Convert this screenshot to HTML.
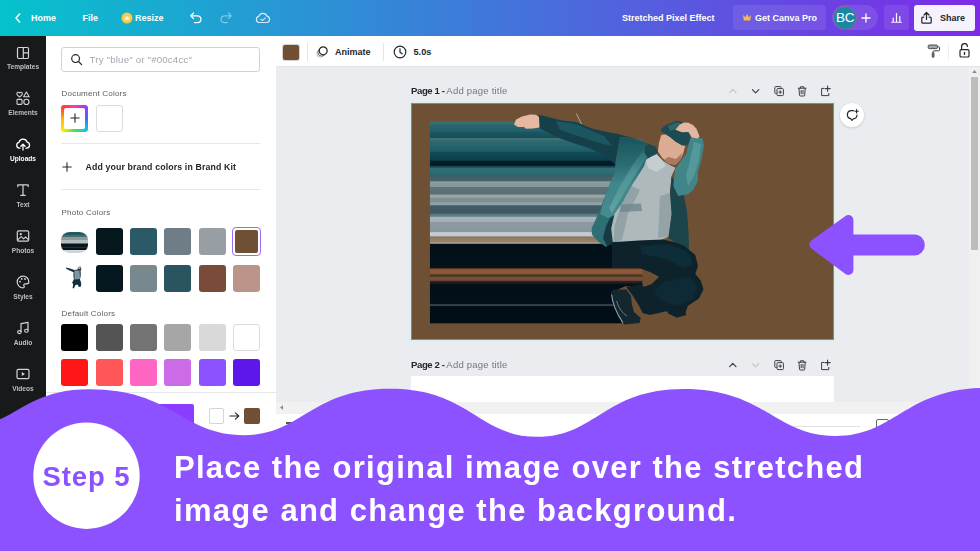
<!DOCTYPE html>
<html lang="en">
<head>
<meta charset="utf-8">
<title>Step 5 - Stretched Pixel Effect</title>
<style>
*{box-sizing:border-box;margin:0;padding:0}
html,body{width:980px;height:551px;overflow:hidden;background:#ebecf0}
body{position:relative;font-family:"Liberation Sans",Arial,sans-serif;color:#0e1318}
.abs{position:absolute}
#topbar{left:0;top:0;width:980px;height:36px;background:linear-gradient(90deg,#05c3cc 0%,#7d2ae8 100%)}
#topbar .t{position:absolute;color:#fff;font-weight:bold;font-size:9px;line-height:12px;top:12px;white-space:nowrap}
#side{left:0;top:36px;width:46px;height:515px;background:#18191b}
#side .lab{position:absolute;left:0;width:46px;text-align:center;color:#bcbfc4;font-size:6.6px;font-weight:bold;line-height:8px}
#side svg{position:absolute;left:15px;width:16px;height:16px;overflow:visible}
#panel{left:46px;top:36px;width:229.5px;height:515px;background:#fff}
#toolbar{left:275.5px;top:36px;width:704.5px;height:30.6px;background:#fff;border-bottom:1px solid #e2e3e7}
#toolbar>*{margin-top:.8px}
.sw{position:absolute;width:27px;height:27px;border-radius:3px}
.ptxt{position:absolute;font-size:8.1px;letter-spacing:.18px;line-height:10px;color:#5b6066;white-space:nowrap}
.hr{position:absolute;left:61px;width:199px;height:1px;background:#e6e7ea}
.plabel{position:absolute;font-size:9.55px;letter-spacing:.2px;line-height:12px;white-space:nowrap;color:#73777c}
.plabel b{color:#22262b;letter-spacing:-.4px;margin-right:-.4px}
</style>
</head>
<body>
<!-- underlay blocks (so soft edges of the UI layer blend into the same colours) -->
<div class="abs" style="left:0;top:0;width:980px;height:36px;background:linear-gradient(90deg,#05c3cc 0%,#7d2ae8 100%)"></div>
<div class="abs" style="left:0;top:36px;width:46px;height:515px;background:#18191b"></div>
<div class="abs" style="left:46px;top:36px;width:229.5px;height:515px;background:#fff"></div>
<div class="abs" style="left:275.5px;top:36px;width:704.5px;height:30px;background:#fff"></div>
<div class="abs" style="left:969px;top:67px;width:11px;height:347px;background:#f0f0f1"></div>
<div id="ui" class="abs" style="left:0;top:0;width:980px;height:551px;filter:blur(.5px)">
<!-- ============ TOP BAR ============ -->
<div class="abs" id="topbar">
  <svg class="abs" style="left:14px;top:12px" width="8" height="12" viewBox="0 0 8 12"><path d="M5.6 2 L2 6 L5.6 10" fill="none" stroke="#fff" stroke-width="1.5" stroke-linecap="round" stroke-linejoin="round"/></svg>
  <span class="t" style="left:31px">Home</span>
  <span class="t" style="left:82.5px">File</span>
  <svg class="abs" style="left:121px;top:12px" width="12" height="12" viewBox="0 0 12 12"><circle cx="6" cy="6" r="5.5" fill="#f8c94a"/><path d="M3.2 4.3 L4.8 5.8 L6 3.6 L7.2 5.8 L8.8 4.3 L8.2 8.2 L3.8 8.2 Z" fill="#fff6d8"/></svg>
  <span class="t" style="left:135px">Resize</span>
  <svg class="abs" style="left:189px;top:11px" width="14" height="14" viewBox="0 0 14 14"><path d="M4.5 2 L1.8 4.8 L4.5 7.6 M2 4.8 H8.5 A3.4 3.4 0 0 1 8.5 11.6 H5.5" fill="none" stroke="#fff" stroke-width="1.3" stroke-linecap="round" stroke-linejoin="round"/></svg>
  <svg class="abs" style="left:219px;top:11px;opacity:.4" width="14" height="14" viewBox="0 0 14 14"><path d="M9.5 2 L12.2 4.8 L9.5 7.6 M12 4.8 H5.5 A3.4 3.4 0 0 0 5.5 11.6 H8.5" fill="none" stroke="#fff" stroke-width="1.3" stroke-linecap="round" stroke-linejoin="round"/></svg>
  <svg class="abs" style="left:255px;top:11px;opacity:.8" width="16" height="14" viewBox="0 0 16 14"><path d="M4.2 11.5 A3.1 3.1 0 0 1 3.8 5.4 A4.3 4.3 0 0 1 12 5.2 A3.2 3.2 0 0 1 11.8 11.5 Z" fill="none" stroke="#fff" stroke-width="1.2" stroke-linejoin="round"/><path d="M5.8 8.2 L7.4 9.7 L10.2 6.8" fill="none" stroke="#fff" stroke-width="1.1" stroke-linecap="round" stroke-linejoin="round"/></svg>
  <span class="t" style="left:622px">Stretched Pixel Effect</span>
  <div class="abs" style="left:733px;top:5px;width:93px;height:25px;border-radius:3px;background:rgba(255,255,255,.09)"></div>
  <svg class="abs" style="left:742px;top:13px" width="10" height="9" viewBox="0 0 10 9"><path d="M1 2 L3.2 4.2 L5 1 L6.8 4.2 L9 2 L8.2 7.6 L1.8 7.6 Z" fill="#f5b944"/></svg>
  <span class="t" style="left:755px">Get Canva Pro</span>
  <div class="abs" style="left:832px;top:5px;width:46px;height:25px;border-radius:13px;background:rgba(255,255,255,.10)"></div>
  <div class="abs" style="left:833px;top:6px;width:24px;height:24px;border-radius:12px;background:#1a87a6;border:1.2px solid #a75a8a;color:#fff;font-size:13.5px;line-height:21.6px;text-align:center;letter-spacing:-.3px">BC</div>
  <svg class="abs" style="left:861px;top:13px" width="10" height="10" viewBox="0 0 10 10"><path d="M5 1 V9 M1 5 H9" stroke="#fff" stroke-width="1.3" stroke-linecap="round"/></svg>
  <div class="abs" style="left:884px;top:5px;width:25px;height:25px;border-radius:3px;background:rgba(255,255,255,.09)"></div>
  <svg class="abs" style="left:890px;top:11px" width="13" height="13" viewBox="0 0 13 13"><path d="M3.2 10.5 V7 M6.5 10.5 V2.5 M9.8 10.5 V5.5" stroke="#fff" stroke-width="1.2" stroke-linecap="round"/><path d="M1.5 11.3 H11.5" stroke="#fff" stroke-width=".9" stroke-linecap="round"/></svg>
  <div class="abs" style="left:914px;top:5px;width:61px;height:26px;border-radius:3px;background:#f6f2fd"></div>
  <svg class="abs" style="left:920px;top:11px" width="13" height="14" viewBox="0 0 13 14"><path d="M6.5 8.5 V1.8 M4 4 L6.5 1.5 L9 4" fill="none" stroke="#22262b" stroke-width="1.2" stroke-linecap="round" stroke-linejoin="round"/><path d="M3.8 6.2 H2.8 A1 1 0 0 0 1.8 7.2 V11.2 A1 1 0 0 0 2.8 12.2 H10.2 A1 1 0 0 0 11.2 11.2 V7.2 A1 1 0 0 0 10.2 6.2 H9.2" fill="none" stroke="#22262b" stroke-width="1.2" stroke-linecap="round"/></svg>
  <span class="t" style="left:940px;color:#22262b">Share</span>
</div>
<!-- ============ LEFT SIDEBAR ============ -->
<div class="abs" id="side">
  <svg style="top:9px" viewBox="0 0 16 16"><rect x="2.5" y="2.5" width="11" height="11" rx="1.2" fill="none" stroke="#d2d4d8" stroke-width="1.2"/><path d="M8.3 2.5 V13.5 M8.3 7.8 H13.5" stroke="#d2d4d8" stroke-width="1.2"/></svg>
  <div class="lab" style="top:27px">Templates</div>
  <svg style="top:54px" viewBox="0 0 16 16"><path d="M4.6 7 C3 5.8 1.8 4.9 1.8 3.7 A1.5 1.5 0 0 1 4.6 3 A1.5 1.5 0 0 1 7.4 3.7 C7.4 4.9 6.2 5.8 4.6 7 Z M11.4 2 L14.2 6.8 H8.6 Z" fill="none" stroke="#d2d4d8" stroke-width="1.1" stroke-linejoin="round"/><rect x="2" y="9.4" width="5" height="5" rx=".8" fill="none" stroke="#d2d4d8" stroke-width="1.1"/><circle cx="11.4" cy="11.9" r="2.6" fill="none" stroke="#d2d4d8" stroke-width="1.1"/></svg>
  <div class="lab" style="top:73px">Elements</div>
  <svg style="top:100px" viewBox="0 0 16 16"><path d="M5 12.2 H4.4 A3 3 0 0 1 4 6.3 A4.2 4.2 0 0 1 12.1 6.1 A3.1 3.1 0 0 1 11.8 12.2 H11" fill="none" stroke="#fff" stroke-width="1.3" stroke-linecap="round" stroke-linejoin="round"/><path d="M8 14 V8.3 M5.9 10.2 L8 8.1 L10.1 10.2" fill="none" stroke="#fff" stroke-width="1.3" stroke-linecap="round" stroke-linejoin="round"/></svg>
  <div class="lab" style="top:119px;color:#fff">Uploads</div>
  <svg style="top:146px" viewBox="0 0 16 16"><path d="M2.8 4.6 V2.8 H13.2 V4.6 M8 2.8 V13.4 M5.8 13.4 H10.2" fill="none" stroke="#d2d4d8" stroke-width="1.2" stroke-linecap="round" stroke-linejoin="round"/></svg>
  <div class="lab" style="top:165px">Text</div>
  <svg style="top:192px" viewBox="0 0 16 16"><rect x="2.3" y="2.8" width="11.4" height="10.4" rx="1.4" fill="none" stroke="#d2d4d8" stroke-width="1.2"/><circle cx="5.8" cy="6.2" r="1.1" fill="#d2d4d8"/><path d="M2.6 11.8 L6.2 8.6 L8.6 10.8 L10.6 9 L13.4 11.6" fill="none" stroke="#d2d4d8" stroke-width="1.1" stroke-linejoin="round"/></svg>
  <div class="lab" style="top:211px">Photos</div>
  <svg style="top:238px" viewBox="0 0 16 16"><path d="M8 2.2 A5.8 5.8 0 1 0 8 13.8 C9.4 13.8 9.6 12.7 9 11.9 C8.3 10.9 9 9.8 10.2 9.8 H11.8 A2 2 0 0 0 13.8 7.8 C13.8 4.6 11.2 2.2 8 2.2 Z" fill="none" stroke="#d2d4d8" stroke-width="1.2" stroke-linejoin="round"/><circle cx="5" cy="7.6" r=".9" fill="#d2d4d8"/><circle cx="6.8" cy="4.9" r=".9" fill="#d2d4d8"/><circle cx="10" cy="5" r=".9" fill="#d2d4d8"/></svg>
  <div class="lab" style="top:257px">Styles</div>
  <svg style="top:284px" viewBox="0 0 16 16"><path d="M6 12 V3.6 L13 2.4 V10.6" fill="none" stroke="#d2d4d8" stroke-width="1.2" stroke-linejoin="round"/><ellipse cx="4.4" cy="12.1" rx="1.8" ry="1.5" fill="none" stroke="#d2d4d8" stroke-width="1.1"/><ellipse cx="11.4" cy="10.8" rx="1.8" ry="1.5" fill="none" stroke="#d2d4d8" stroke-width="1.1"/></svg>
  <div class="lab" style="top:303px">Audio</div>
  <svg style="top:330px" viewBox="0 0 16 16"><rect x="2" y="3.4" width="12" height="9.2" rx="1.4" fill="none" stroke="#d2d4d8" stroke-width="1.2"/><path d="M6.8 6 L10 8 L6.8 10 Z" fill="#d2d4d8"/></svg>
  <div class="lab" style="top:349px">Videos</div>
</div>

<!-- ============ COLOR PANEL ============ -->
<div class="abs" id="panel">
  <div class="abs" style="left:15px;top:11px;width:198.5px;height:24.5px;border:1px solid #cfd2d7;border-radius:3px"></div>
  <svg class="abs" style="left:23.5px;top:17px" width="13" height="13" viewBox="0 0 13 13"><circle cx="5.6" cy="5.6" r="3.9" fill="none" stroke="#22262b" stroke-width="1.2"/><path d="M8.5 8.5 L11.6 11.6" stroke="#22262b" stroke-width="1.3" stroke-linecap="round"/></svg>
  <div class="ptxt" style="left:43.5px;top:17.5px;font-size:9.7px;line-height:12px;color:#a3a7ad">Try "blue" or "#00c4cc"</div>
  <div class="ptxt" style="left:15.5px;top:52.5px">Document Colors</div>
  <div class="sw" style="left:15px;top:68.5px;background:conic-gradient(from -45deg,#ff3b3b,#ff3bb0,#a03bff,#3b6bff,#19c3e6,#4be04b,#ffe600,#ffb400,#ff3b3b)"></div>
  <div class="abs" style="left:18px;top:71.5px;width:21px;height:21px;border-radius:2px;background:#fff"></div>
  <svg class="abs" style="left:23.5px;top:77px" width="10" height="10" viewBox="0 0 10 10"><path d="M5 .8 V9.2 M.8 5 H9.2" stroke="#22262b" stroke-width="1.1" stroke-linecap="round"/></svg>
  <div class="sw" style="left:49.6px;top:68.5px;background:#fff;border:1px solid #d9dbde"></div>
  <div class="hr" style="left:15px;top:106.5px"></div>
  <svg class="abs" style="left:15.5px;top:125.5px" width="10" height="10" viewBox="0 0 10 10"><path d="M5 .8 V9.2 M.8 5 H9.2" stroke="#22262b" stroke-width="1.1" stroke-linecap="round"/></svg>
  <div class="ptxt" style="left:39.5px;top:125.6px;font-size:8.75px;font-weight:bold;color:#22262b;letter-spacing:.14px">Add your brand colors in Brand Kit</div>
  <div class="hr" style="left:15px;top:153px"></div>
  <div class="ptxt" style="left:15.5px;top:171.8px">Photo Colors</div>
  <!-- row 1 -->
  <div class="abs" style="left:15px;top:196px;width:27.3px;height:20.6px;border-radius:9px/8px;background:linear-gradient(180deg,#1e5a60 0 16%,#4a6a70 16% 24%,#8c9aa0 24% 40%,#b4bfc3 40% 50%,#6b6a62 50% 56%,#08161b 56% 70%,#3a2a20 70% 76%,#07151a 76% 86%,#cfd6d9 86% 100%)"></div>
  <div class="sw" style="left:49.6px;top:192px;background:#07171e"></div>
  <div class="sw" style="left:83.9px;top:192px;background:#2b5a66"></div>
  <div class="sw" style="left:118.3px;top:192px;background:#6e7d86"></div>
  <div class="sw" style="left:152.6px;top:192px;background:#989fa4"></div>
  <div class="abs" style="left:186px;top:191px;width:29px;height:29px;border-radius:4px;border:1.6px solid #9b6bf2;background:#fff"></div>
  <div class="abs" style="left:189px;top:194px;width:23px;height:23px;border-radius:2px;background:#6f5035"></div>
  <!-- row 2 -->
  <svg class="abs" style="left:15px;top:229px" width="27" height="27" viewBox="61 265 27 27"><path d="M66 267.6 L70 268.6 L74.5 270 L77.5 269.5 L78.2 267 L80.4 266.6 L81.4 268.6 L80.6 271 L80.8 275 L80 279.5 L81.2 283 L81 286.5 L79 287 L77.5 284.5 L75.5 285 L73.8 288.5 L72.6 288 L73.2 284.6 L72.2 282.4 L73.8 279.6 L73.4 275 L73.6 272.2 L69.6 270.4 L66.2 268.8 Z" fill="#14303a"/><path d="M74.4 270.6 L79.6 270.4 L80 279 L74.4 279.4 Z" fill="#7f97a2"/><circle cx="79.4" cy="268" r="1.3" fill="#c9a08e"/></svg>
  <div class="sw" style="left:49.6px;top:229px;background:#051820"></div>
  <div class="sw" style="left:83.9px;top:229px;background:#76898f"></div>
  <div class="sw" style="left:118.3px;top:229px;background:#2a5560"></div>
  <div class="sw" style="left:152.6px;top:229px;background:#7b4b3a"></div>
  <div class="sw" style="left:187px;top:229px;background:#bb948a"></div>
  <div class="ptxt" style="left:15.5px;top:272.6px">Default Colors</div>
  <!-- row 3 -->
  <div class="sw" style="left:15px;top:288px;background:#000"></div>
  <div class="sw" style="left:49.6px;top:288px;background:#545454"></div>
  <div class="sw" style="left:83.9px;top:288px;background:#737373"></div>
  <div class="sw" style="left:118.3px;top:288px;background:#a6a6a6"></div>
  <div class="sw" style="left:152.6px;top:288px;background:#d9d9d9"></div>
  <div class="sw" style="left:187px;top:288px;background:#fff;border:1px solid #d9dbde"></div>
  <!-- row 4 -->
  <div class="sw" style="left:15px;top:322.5px;background:#ff1616"></div>
  <div class="sw" style="left:49.6px;top:322.5px;background:#ff5757"></div>
  <div class="sw" style="left:83.9px;top:322.5px;background:#ff66c4"></div>
  <div class="sw" style="left:118.3px;top:322.5px;background:#cb6ce6"></div>
  <div class="sw" style="left:152.6px;top:322.5px;background:#8c52ff"></div>
  <div class="sw" style="left:187px;top:322.5px;background:#5e17eb"></div>
  <div class="abs" style="left:0;top:356px;width:230px;height:1px;background:#e6e7ea"></div>
  <!-- footer: change-all button -->
  <div class="abs" style="left:15px;top:367.5px;width:132.5px;height:24px;border-radius:2px;background:#8b3dff"></div>
  <div class="abs" style="left:162.8px;top:372.3px;width:15.6px;height:15.4px;border:1px solid #d3d5d9;border-radius:2px;background:#fff"></div>
  <svg class="abs" style="left:183px;top:375px" width="11" height="10" viewBox="0 0 11 10"><path d="M1 5 H9.6 M6.4 1.8 L9.8 5 L6.4 8.2" fill="none" stroke="#22262b" stroke-width="1.1" stroke-linecap="round" stroke-linejoin="round"/></svg>
  <div class="abs" style="left:198px;top:372.3px;width:16.2px;height:15.4px;border-radius:2px;background:#6f5035"></div>
</div>
<!-- ============ TOOLBAR ============ -->
<div class="abs" id="toolbar">
  <div class="abs" style="left:7.5px;top:8px;width:15.5px;height:15px;border-radius:2px;background:#6f5035;box-shadow:0 0 0 1px rgba(111,80,53,.25)"></div>
  <div class="abs" style="left:31px;top:6px;width:1px;height:18px;background:#e4e5e8"></div>
  <svg class="abs" style="left:38px;top:7px" width="16" height="16" viewBox="0 0 16 16"><circle cx="6.4" cy="9.6" r="3.6" fill="none" stroke="#b9bcc1" stroke-width="1"/><circle cx="7.6" cy="8.4" r="3.7" fill="#fff" stroke="#6a6e74" stroke-width="1"/><circle cx="9.2" cy="6.8" r="4" fill="#fff" stroke="#22262b" stroke-width="1.2"/></svg>
  <div class="abs" style="left:59.5px;top:9px;font-size:9px;line-height:12px;font-weight:bold;color:#22262b">Animate</div>
  <div class="abs" style="left:107.5px;top:6px;width:1px;height:18px;background:#e4e5e8"></div>
  <svg class="abs" style="left:117px;top:8px" width="14" height="14" viewBox="0 0 14 14"><circle cx="7" cy="7" r="5.8" fill="none" stroke="#22262b" stroke-width="1.2"/><path d="M7 3.8 V7.2 L9.2 8.8" fill="none" stroke="#22262b" stroke-width="1.2" stroke-linecap="round" stroke-linejoin="round"/></svg>
  <div class="abs" style="left:138px;top:9px;font-size:9.2px;line-height:12px;font-weight:bold;color:#22262b">5.0s</div>
  <svg class="abs" style="left:650px;top:6.6px" width="15" height="16" viewBox="0 0 15 16"><rect x="2.2" y="2" width="9.2" height="3.6" rx="1.1" fill="#a1a4a9" stroke="#3c3f44" stroke-width=".9"/><path d="M11.4 3.8 H12.6 A.9 .9 0 0 1 13.5 4.7 V6.9 A.9 .9 0 0 1 12.6 7.8 H8 A.9 .9 0 0 0 7.1 8.7 V9.8" fill="none" stroke="#3c3f44" stroke-width="1"/><rect x="6" y="9.6" width="2.2" height="4.8" rx=".8" fill="#6a6d72" stroke="#3c3f44" stroke-width=".5"/></svg>
  <div class="abs" style="left:672.5px;top:6px;width:1px;height:18px;background:#eeeff1"></div>
  <svg class="abs" style="left:682px;top:5px" width="13" height="17" viewBox="0 0 13 17"><path d="M3.6 7.6 V4.6 A2.9 2.9 0 0 1 9.4 4.4" fill="none" stroke="#22262b" stroke-width="1.2" stroke-linecap="round"/><rect x="2" y="7.6" width="9" height="7.4" rx="1.3" fill="none" stroke="#22262b" stroke-width="1.2"/><path d="M6.5 10.4 V12.4" stroke="#22262b" stroke-width="1.3" stroke-linecap="round"/></svg>
</div>

<!-- ============ CANVAS AREA ============ -->
<!-- vertical scrollbar -->
<div class="abs" style="left:969px;top:67px;width:11px;height:347px;background:#f0f0f1"></div>
<div class="abs" style="left:971px;top:77px;width:7px;height:173px;background:#bdbdbe"></div>
<svg class="abs" style="left:971px;top:69px" width="7" height="5" viewBox="0 0 7 5"><path d="M3.5 1 L5.8 4 H1.2 Z" fill="#8c8c8c"/></svg>

<!-- page 1 header -->
<div class="plabel" style="left:411px;top:85px"><b>Page 1 -</b> Add page title</div>
<svg class="abs" style="left:726px;top:84px" width="108" height="14" viewBox="0 0 108 14">
  <path d="M3.6 8.6 L6.8 5.4 L10 8.6" fill="none" stroke="#c3c5c9" stroke-width="1.2" stroke-linecap="round" stroke-linejoin="round"/>
  <path d="M26.4 5.6 L29.6 8.8 L32.8 5.6" fill="none" stroke="#3a3f45" stroke-width="1.2" stroke-linecap="round" stroke-linejoin="round"/>
  <path d="M50.8 9.6 H49.6 A.8 .8 0 0 1 48.8 8.8 V3.4 A.8 .8 0 0 1 49.6 2.6 H54.4 A.8 .8 0 0 1 55.2 3.4 V4.4" fill="none" stroke="#3a3f45" stroke-width="1"/><rect x="51" y="4.6" width="6.4" height="7" rx=".9" fill="none" stroke="#3a3f45" stroke-width="1"/><path d="M54.2 6.4 V9.8 M52.5 8.1 H55.9" stroke="#3a3f45" stroke-width="1"/>
  <path d="M72.2 4.2 H80 M74.4 4 V2.8 H77.8 V4 M73 4.4 L73.5 11.2 A.8 .8 0 0 0 74.3 12 H77.9 A.8 .8 0 0 0 78.7 11.2 L79.2 4.4 M75.2 6.4 V9.8 M77 6.4 V9.8" fill="none" stroke="#3a3f45" stroke-width="1" stroke-linecap="round" stroke-linejoin="round"/>
  <path d="M98.2 4.4 H95.6 V11.6 H102.8 V9" fill="none" stroke="#3a3f45" stroke-width="1" stroke-linejoin="round"/><path d="M101.6 2 V7.2 M99 4.6 H104.2" stroke="#3a3f45" stroke-width="1.1" stroke-linecap="round"/>
</svg>

<!-- comment bubble -->
<div class="abs" style="left:840px;top:103px;width:24px;height:24px;border-radius:12px;background:#fff;box-shadow:0 1px 3px rgba(40,50,70,.18)"></div>
<svg class="abs" style="left:845px;top:108px" width="15" height="15" viewBox="0 0 15 15"><path d="M8.6 2.6 H6.4 A4.1 4.1 0 0 0 5.6 10.7 L6.9 12.3 L8.3 10.8 A4.1 4.1 0 0 0 12 7.2" fill="none" stroke="#22262b" stroke-width="1.2" stroke-linecap="round" stroke-linejoin="round"/><path d="M11.6 1.6 V5 M9.9 3.3 H13.3" stroke="#22262b" stroke-width="1.1" stroke-linecap="round"/></svg>

<!-- page 1 canvas -->
<div class="abs" style="left:408.8px;top:100.6px;width:427.2px;height:241.2px;background:#d9f2f1;border-radius:1px"></div>
<div class="abs" style="left:410.7px;top:102.6px;width:423.7px;height:237.4px;background:#3fa89f"></div>
<div class="abs" style="left:412px;top:104px;width:421px;height:234.5px;background:#6e5035;overflow:hidden">
  <svg class="abs" style="left:0;top:0" width="421" height="234.5" viewBox="412 104 421 234.5">
  <g><defs><linearGradient id="s0" x1="0" y1="0" x2="0" y2="1"><stop offset="0" stop-color="#3a7279"/><stop offset="1" stop-color="#2f6a73"/></linearGradient><linearGradient id="s1" x1="0" y1="0" x2="0" y2="1"><stop offset="0" stop-color="#2b6771"/><stop offset="1" stop-color="#245e69"/></linearGradient><linearGradient id="s2" x1="0" y1="0" x2="0" y2="1"><stop offset="0" stop-color="#1b5762"/><stop offset="1" stop-color="#134e5a"/></linearGradient><linearGradient id="s3" x1="0" y1="0" x2="0" y2="1"><stop offset="0" stop-color="#3c7981"/><stop offset="1" stop-color="#337179"/></linearGradient><linearGradient id="s4" x1="0" y1="0" x2="0" y2="1"><stop offset="0" stop-color="#2c6b74"/><stop offset="1" stop-color="#1e5a66"/></linearGradient><linearGradient id="s5" x1="0" y1="0" x2="0" y2="1"><stop offset="0" stop-color="#114d59"/><stop offset="1" stop-color="#0a3c48"/></linearGradient><linearGradient id="s6" x1="0" y1="0" x2="0" y2="1"><stop offset="0" stop-color="#03202a"/><stop offset="1" stop-color="#021822"/></linearGradient><linearGradient id="s7" x1="0" y1="0" x2="0" y2="1"><stop offset="0" stop-color="#0f3f4a"/><stop offset="1" stop-color="#27656e"/></linearGradient><linearGradient id="s8" x1="0" y1="0" x2="0" y2="1"><stop offset="0" stop-color="#2f7179"/><stop offset="1" stop-color="#2a6870"/></linearGradient><linearGradient id="s9" x1="0" y1="0" x2="0" y2="1"><stop offset="0" stop-color="#3a5c63"/><stop offset="1" stop-color="#4a656b"/></linearGradient><linearGradient id="s10" x1="0" y1="0" x2="0" y2="1"><stop offset="0" stop-color="#8d9da2"/><stop offset="1" stop-color="#86979c"/></linearGradient><linearGradient id="s11" x1="0" y1="0" x2="0" y2="1"><stop offset="0" stop-color="#5f747a"/><stop offset="1" stop-color="#5a6f75"/></linearGradient><linearGradient id="s12" x1="0" y1="0" x2="0" y2="1"><stop offset="0" stop-color="#9ba9ac"/><stop offset="1" stop-color="#95a3a6"/></linearGradient><linearGradient id="s13" x1="0" y1="0" x2="0" y2="1"><stop offset="0" stop-color="#7d8e90"/><stop offset="1" stop-color="#7f9093"/></linearGradient><linearGradient id="s14" x1="0" y1="0" x2="0" y2="1"><stop offset="0" stop-color="#90a4ab"/><stop offset="1" stop-color="#8a9ea5"/></linearGradient><linearGradient id="s15" x1="0" y1="0" x2="0" y2="1"><stop offset="0" stop-color="#415c64"/><stop offset="1" stop-color="#3d5860"/></linearGradient><linearGradient id="s16" x1="0" y1="0" x2="0" y2="1"><stop offset="0" stop-color="#5a757d"/><stop offset="1" stop-color="#64808a"/></linearGradient><linearGradient id="s17" x1="0" y1="0" x2="0" y2="1"><stop offset="0" stop-color="#a6b6bc"/><stop offset="1" stop-color="#9fafb5"/></linearGradient><linearGradient id="s18" x1="0" y1="0" x2="0" y2="1"><stop offset="0" stop-color="#8e9ca0"/><stop offset="1" stop-color="#8a969d"/></linearGradient><linearGradient id="s19" x1="0" y1="0" x2="0" y2="1"><stop offset="0" stop-color="#c5d0d4"/><stop offset="1" stop-color="#c0cace"/></linearGradient><linearGradient id="s20" x1="0" y1="0" x2="0" y2="1"><stop offset="0" stop-color="#8a7560"/><stop offset="1" stop-color="#9a8672"/></linearGradient><linearGradient id="s21" x1="0" y1="0" x2="0" y2="1"><stop offset="0" stop-color="#b5a898"/><stop offset="1" stop-color="#a89a8a"/></linearGradient><linearGradient id="s22" x1="0" y1="0" x2="0" y2="1"><stop offset="0" stop-color="#020f18"/><stop offset="1" stop-color="#03121b"/></linearGradient><linearGradient id="s23" x1="0" y1="0" x2="0" y2="1"><stop offset="0" stop-color="#4a3020"/><stop offset="1" stop-color="#6a4530"/></linearGradient><linearGradient id="s24" x1="0" y1="0" x2="0" y2="1"><stop offset="0" stop-color="#92593c"/><stop offset="1" stop-color="#8a563a"/></linearGradient><linearGradient id="s25" x1="0" y1="0" x2="0" y2="1"><stop offset="0" stop-color="#4f3523"/><stop offset="1" stop-color="#4a3220"/></linearGradient><linearGradient id="s26" x1="0" y1="0" x2="0" y2="1"><stop offset="0" stop-color="#7a523c"/><stop offset="1" stop-color="#70493a"/></linearGradient><linearGradient id="s27" x1="0" y1="0" x2="0" y2="1"><stop offset="0" stop-color="#3a2a20"/><stop offset="1" stop-color="#0a1218"/></linearGradient><linearGradient id="s28" x1="0" y1="0" x2="0" y2="1"><stop offset="0" stop-color="#020e18"/><stop offset="1" stop-color="#03111a"/></linearGradient><linearGradient id="s29" x1="0" y1="0" x2="0" y2="1"><stop offset="0" stop-color="#4a5a66"/><stop offset="1" stop-color="#4a5a66"/></linearGradient><linearGradient id="s30" x1="0" y1="0" x2="0" y2="1"><stop offset="0" stop-color="#020e17"/><stop offset="1" stop-color="#020d15"/></linearGradient><clipPath id="sc"><path d="M429.8 121.4 L560 121.4 L600 131.5 L642.6 140 L642.6 286 L626 286 L612 292 L622 323.6 L429.8 323.6 Z"/></clipPath><linearGradient id="jk" gradientUnits="userSpaceOnUse" x1="0" y1="138" x2="0" y2="215"><stop offset="0" stop-color="#1c555d"/><stop offset=".35" stop-color="#2c6c73"/><stop offset=".6" stop-color="#41868a"/><stop offset="1" stop-color="#468b8e"/></linearGradient><linearGradient id="jk2" gradientUnits="userSpaceOnUse" x1="0" y1="148" x2="0" y2="213"><stop offset="0" stop-color="#2a6a72"/><stop offset=".4" stop-color="#4f9294"/><stop offset="1" stop-color="#62a2a2"/></linearGradient><filter id="soft" x="-5%" y="-5%" width="110%" height="110%"><feGaussianBlur stdDeviation="0.55"/></filter></defs>
<g clip-path="url(#sc)"><rect x="429.8" y="121.4" width="212.8" height="3.4" fill="url(#s0)"/>
<rect x="429.8" y="124.5" width="212.8" height="7.3" fill="url(#s1)"/>
<rect x="429.8" y="131.5" width="212.8" height="7.0" fill="url(#s2)"/>
<rect x="429.8" y="138.2" width="212.8" height="2.5" fill="url(#s3)"/>
<rect x="429.8" y="140.4" width="212.8" height="11.7" fill="url(#s4)"/>
<rect x="429.8" y="151.8" width="212.8" height="9.2" fill="url(#s5)"/>
<rect x="429.8" y="160.7" width="212.8" height="5.4" fill="url(#s6)"/>
<rect x="429.8" y="165.8" width="212.8" height="2.9" fill="url(#s7)"/>
<rect x="429.8" y="168.4" width="212.8" height="6.6" fill="url(#s8)"/>
<rect x="429.8" y="174.7" width="212.8" height="6.9" fill="url(#s9)"/>
<rect x="429.8" y="181.3" width="212.8" height="6.0" fill="url(#s10)"/>
<rect x="429.8" y="187.0" width="212.8" height="7.9" fill="url(#s11)"/>
<rect x="429.8" y="194.6" width="212.8" height="3.5" fill="url(#s12)"/>
<rect x="429.8" y="197.8" width="212.8" height="4.7" fill="url(#s13)"/>
<rect x="429.8" y="202.2" width="212.8" height="3.5" fill="url(#s14)"/>
<rect x="429.8" y="205.4" width="212.8" height="8.6" fill="url(#s15)"/>
<rect x="429.8" y="213.7" width="212.8" height="3.4" fill="url(#s16)"/>
<rect x="429.8" y="216.8" width="212.8" height="5.4" fill="url(#s17)"/>
<rect x="429.8" y="221.9" width="212.8" height="10.5" fill="url(#s18)"/>
<rect x="429.8" y="232.1" width="212.8" height="4.7" fill="url(#s19)"/>
<rect x="429.8" y="236.5" width="212.8" height="6.1" fill="url(#s20)"/>
<rect x="429.8" y="242.3" width="212.8" height="1.8" fill="url(#s21)"/>
<rect x="429.8" y="243.8" width="212.8" height="24.5" fill="url(#s22)"/>
<rect x="429.8" y="268.0" width="212.8" height="1.7" fill="url(#s23)"/>
<rect x="429.8" y="269.4" width="212.8" height="5.2" fill="url(#s24)"/>
<rect x="429.8" y="274.3" width="212.8" height="2.8" fill="url(#s25)"/>
<rect x="429.8" y="276.8" width="212.8" height="4.3" fill="url(#s26)"/>
<rect x="429.8" y="280.8" width="212.8" height="3.6" fill="url(#s27)"/>
<rect x="429.8" y="284.1" width="212.8" height="20.7" fill="url(#s28)"/>
<rect x="429.8" y="304.5" width="212.8" height="1.5" fill="url(#s29)"/>
<rect x="429.8" y="305.7" width="212.8" height="18.0" fill="url(#s30)"/></g></g>
  <g><g filter="url(#soft)"><path d="M538.0 115.5 L541.0 115.2 L550.0 117.5 L561.0 120.3 L576.5 122.3 L591.8 128.5 L603.5 131.2 L618.0 134.0 L632.6 138.0 L647.0 143.5 L656.0 147.0 L652.0 156.0 L640.0 166.0 L628.0 170.0 L615.0 164.0 L603.5 155.0 L589.0 148.0 L574.5 143.5 L561.0 138.7 L546.0 131.5 L538.5 128.0 Z" fill="#12414a" />
<path d="M556.0 121.0 L576.0 124.0 L592.0 131.0 L604.0 136.0 L612.0 146.0 L596.0 142.0 L578.0 136.0 L560.0 130.0 Z" fill="#1c5660" />
<path d="M576.3 113.5 L581.5 124" stroke="#b9a58e" stroke-width="1"/>
<path d="M514.0 124.5 L516.0 119.5 L522.0 116.5 L530.0 114.5 L536.0 114.8 L539.0 117.0 L539.5 127.5 L533.0 128.5 L526.0 128.8 L524.0 127.0 L518.0 127.0 Z" fill="#e6b8a2" />
<path d="M620.0 137.0 L632.6 138.0 L647.0 143.5 L652.0 152.0 L643.9 166.5 L632.4 184.5 L622.7 202.4 L616.0 214.0 L612.5 228.0 L611.0 243.0 L606.0 247.0 L598.0 241.5 L592.0 234.5 L591.6 228.6 L598.2 213.9 L606.3 192.7 L614.5 173.0 L616.0 160.0 Z" fill="#2f6e74" />
<path d="M620.0 137.0 L632.6 138.0 L647.0 143.5 L652.0 152.0 L643.9 166.5 L632.4 184.5 L622.7 202.4 L616.0 214.0 L608.0 218.0 L600.0 214.0 L606.3 192.7 L614.5 173.0 L616.0 160.0 Z" fill="url(#jk)" />
<path d="M645.0 148.0 L650.0 152.0 L632.0 180.0 L620.0 200.0 L612.0 213.0 L609.0 208.0 L620.0 186.0 L632.0 166.0 Z" fill="url(#jk2)" />
<path d="M616.0 214.0 L622.7 202.4 L618.0 222.0 L615.0 236.0 L613.0 244.0 L607.0 246.0 L603.0 238.0 L606.0 226.0 L610.0 218.0 Z" fill="#143a41" />
<path d="M646.0 160.0 L655.8 153.6 L662.0 160.0 L668.8 164.5 L675.4 167.7 L671.6 176.0 L670.0 192.7 L671.6 213.9 L668.4 236.7 L660.0 240.5 L639.0 241.0 L612.9 243.0 L611.2 228.6 L614.5 213.9 L622.7 202.4 L632.4 184.5 L643.9 166.5 Z" fill="#aeb9bc" />
<path d="M646.0 160.0 L655.8 153.6 L662.0 160.0 L666.0 166.0 L656.0 172.0 L648.0 168.0 Z" fill="#c4cdcf" />
<path d="M632.0 186.0 L640.0 190.0 L628.0 214.0 L622.0 240.0 L613.5 243.0 L614.5 226.0 L620.0 208.0 Z" fill="#93a2a7" />
<path d="M621.0 204.5 L641.0 203.5 L642.0 211.0 L620.0 212.0 Z" fill="#6f828b" opacity=".75"/>
<path d="M660.0 196.0 L670.0 192.7 L671.6 213.9 L668.4 236.7 L658.0 238.0 Z" fill="#95a3a7" />
<path d="M646.0 145.0 L656.0 146.5 L658.0 152.0 L655.8 154.5 L648.0 158.0 L644.0 152.0 Z" fill="#1d4a50" />
<path d="M671.6 176.3 L678.0 188.0 L684.0 196.0 L687.0 212.0 L688.5 232.0 L689.0 250.0 L676.0 243.0 L668.4 238.0 L671.6 213.9 L670.0 192.7 Z" fill="#1b444b" />
<path d="M690.6 137.8 L702.6 138.3 L704.0 146.0 L701.5 159.0 L698.0 172.0 L697.8 181.2 L693.0 190.0 L688.0 194.3 L678.2 196.0 L673.3 186.0 L675.0 170.0 L679.7 162.3 L686.3 153.6 L688.4 144.9 Z" fill="#428589" />
<path d="M694.0 142.0 L701.0 144.0 L699.0 160.0 L694.0 176.0 L688.0 186.0 L686.0 176.0 L690.0 160.0 Z" fill="#55989a" />
<path d="M661.2 135.0 L666.6 134.0 L675.4 141.6 L685.2 146.0 L683.0 154.0 L680.8 159.0 L675.4 164.8 L668.8 163.6 L662.3 158.0 L658.0 151.4 L659.0 142.7 Z" fill="#dcab93" />
<path d="M668.0 157.0 L676.0 159.0 L682.0 153.0 L680.8 159.0 L675.4 165.0 L668.8 163.8 L664.0 160.0 Z" fill="#a9785f" />
<path d="M660.4 130.4 L664.0 126.0 L668.8 124.0 L676.4 120.8 L682.0 121.8 L690.0 127.5 L690.5 138.0 L688.0 145.0 L682.0 145.5 L675.4 141.6 L670.0 137.0 L664.0 133.5 Z" fill="#1d4b52" />
<path d="M668.0 126.0 L676.0 122.5 L681.0 123.0 L676.0 129.0 L670.0 131.0 Z" fill="#2f666b" />
<path d="M675.4 129.8 L679.7 124.4 L684.0 122.6 L688.4 122.8 L693.0 125.0 L696.5 128.8 L699.5 136.3 L698.0 138.5 L691.7 137.4 L688.4 132.0 L681.9 132.2 Z" fill="#e4b6a2" />
<path d="M611.8 242.3 L639.0 240.6 L662.6 239.5 L676.0 242.5 L684.4 245.9 L695.3 255.0 L698.0 265.9 L695.3 274.0 L700.7 280.4 L703.5 289.5 L698.9 298.5 L688.0 305.8 L685.3 313.0 L675.3 316.7 L666.3 311.2 L649.9 314.9 L642.6 313.0 L639.0 305.8 L633.0 296.0 L628.0 289.5 L626.0 286.7 L640.8 284.5 L644.5 286.7 L651.7 284.0 L659.0 276.8 L650.0 272.0 L644.5 270.0 L640.0 268.0 L612.0 268.0 Z" fill="#0b232c" />
<path d="M640.0 246.0 L668.0 244.0 L688.0 252.0 L693.0 264.0 L684.0 268.0 L664.0 258.0 L642.0 254.0 Z" fill="#102d37" />
<path d="M664.0 282.0 L690.0 276.0 L698.0 288.0 L692.0 300.0 L676.0 306.0 L660.0 300.0 L654.0 290.0 Z" fill="#0f2a34" />
<path d="M610.9 292.0 L613.6 289.5 L626.3 289.5 L631.0 296.0 L632.0 305.0 L634.0 312.0 L640.8 318.0 L639.5 323.0 L624.5 324.5 L619.0 318.0 L614.0 306.0 Z" fill="#16262d" />
<path d="M611.6 294.5 Q613 308 622.8 322.5" fill="none" stroke="#93a7ac" stroke-width="1.1"/>
<path d="M616.5 301 Q620 312 627 316" fill="none" stroke="#6f858b" stroke-width=".9"/>
<path d="M668.0 307.6 L684.4 305.8 L686.2 314.9 L677.0 317.8 L668.0 313.5 Z" fill="#0e242c" /></g></g>
  </svg>
</div>
<!-- purple arrow -->
<svg class="abs" style="left:800px;top:205px" width="135" height="80" viewBox="800 205 135 80">
  <path d="M814.3 244.5 L848.4 220 L848.4 270 Z" fill="#8c52ff" stroke="#8c52ff" stroke-width="10" stroke-linejoin="round"/>
  <rect x="840" y="234.4" width="84.8" height="21.2" rx="10.6" fill="#8c52ff"/>
</svg>

<!-- page 2 header -->
<div class="plabel" style="left:411px;top:359px"><b>Page 2 -</b> Add page title</div>
<svg class="abs" style="left:726px;top:358px" width="108" height="14" viewBox="0 0 108 14">
  <path d="M3.6 8.6 L6.8 5.4 L10 8.6" fill="none" stroke="#3a3f45" stroke-width="1.2" stroke-linecap="round" stroke-linejoin="round"/>
  <path d="M26.4 5.6 L29.6 8.8 L32.8 5.6" fill="none" stroke="#c3c5c9" stroke-width="1.2" stroke-linecap="round" stroke-linejoin="round"/>
  <path d="M50.8 9.6 H49.6 A.8 .8 0 0 1 48.8 8.8 V3.4 A.8 .8 0 0 1 49.6 2.6 H54.4 A.8 .8 0 0 1 55.2 3.4 V4.4" fill="none" stroke="#3a3f45" stroke-width="1"/><rect x="51" y="4.6" width="6.4" height="7" rx=".9" fill="none" stroke="#3a3f45" stroke-width="1"/><path d="M54.2 6.4 V9.8 M52.5 8.1 H55.9" stroke="#3a3f45" stroke-width="1"/>
  <path d="M72.2 4.2 H80 M74.4 4 V2.8 H77.8 V4 M73 4.4 L73.5 11.2 A.8 .8 0 0 0 74.3 12 H77.9 A.8 .8 0 0 0 78.7 11.2 L79.2 4.4 M75.2 6.4 V9.8 M77 6.4 V9.8" fill="none" stroke="#3a3f45" stroke-width="1" stroke-linecap="round" stroke-linejoin="round"/>
  <path d="M98.2 4.4 H95.6 V11.6 H102.8 V9" fill="none" stroke="#3a3f45" stroke-width="1" stroke-linejoin="round"/><path d="M101.6 2 V7.2 M99 4.6 H104.2" stroke="#3a3f45" stroke-width="1.1" stroke-linecap="round"/>
</svg>
<!-- page 2 canvas -->
<div class="abs" style="left:411px;top:376px;width:423px;height:26px;background:#fff"></div>
<!-- horizontal scrollbar strip + footer -->
<div class="abs" style="left:276px;top:402px;width:693px;height:12px;background:#f1f1f2"></div>
<svg class="abs" style="left:279px;top:404px" width="5" height="7" viewBox="0 0 5 7"><path d="M1 3.5 L4 1.2 V5.8 Z" fill="#8c8c8c"/></svg>
<div class="abs" style="left:276px;top:414px;width:704px;height:137px;background:#fff"></div>
<div class="abs" style="left:286px;top:422.3px;width:8px;height:1.4px;background:#555"></div>
<div class="abs" style="left:286px;top:425.6px;width:8px;height:1.4px;background:#555"></div>
<div class="abs" style="left:760px;top:425.5px;width:100px;height:1.5px;background:#e0e1e4"></div>
<div class="abs" style="left:875.5px;top:419px;width:13px;height:12px;border:1.5px solid #666;border-radius:2px"></div>

</div><!-- /ui -->
<!-- ============ PURPLE WAVE OVERLAY ============ -->
<svg class="abs" style="left:0;top:0" width="980" height="551" viewBox="0 0 980 551">
  <path d="M-33.98 426.52 C15.42 426.52 22.83 389.31 89.52 389.31 C172.79 389.31 182.05 435.16 243.73 435.16 C302.27 435.16 311.05 388.83 390.08 388.83 C469.57 388.83 478.41 436.83 537.29 436.83 C595.83 436.83 604.62 388.95 683.65 388.95 C765.44 388.95 774.53 435.94 835.12 435.94 C895.91 435.94 905.03 387.81 987.09 387.81 L990 551 L-40 551 Z" fill="#8c52ff"/>
  <circle cx="86.5" cy="475.7" r="53.2" fill="#fff"/>
</svg>
<div class="abs" style="left:33px;top:460px;width:107px;text-align:center;font-size:27.5px;line-height:34px;font-weight:bold;color:#8c52ff;letter-spacing:.9px;white-space:nowrap">Step 5</div>
<div class="abs" id="cap" style="left:174px;top:446.2px;font-size:31px;line-height:43px;font-weight:bold;color:#fff;letter-spacing:1.28px;word-spacing:.5px;white-space:nowrap">Place the original image over the stretched<br>image and change the background.</div>
</body>
</html>
